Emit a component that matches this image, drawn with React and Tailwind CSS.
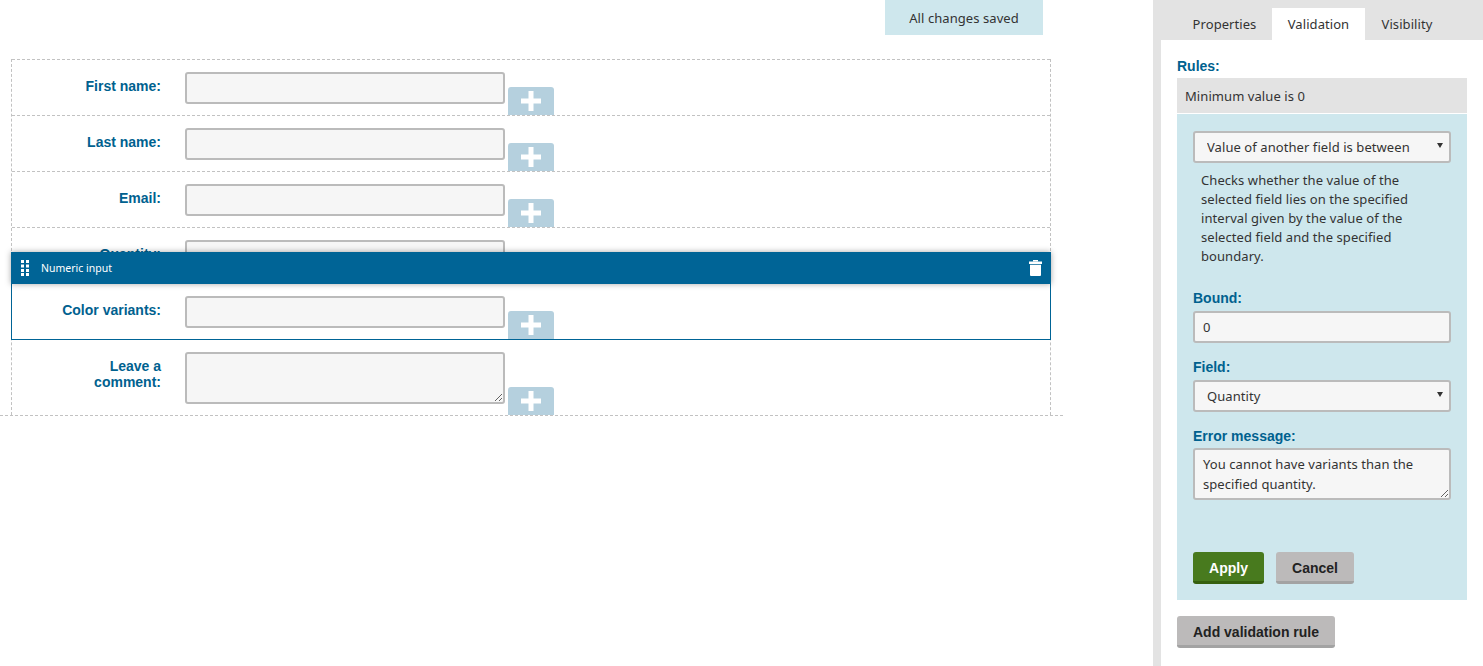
import React from 'react';

const bodyFont = 'font-["Noto_Sans",sans-serif] tracking-[0.07px]';
const labelFont = 'font-["Liberation_Sans",Arial,sans-serif] font-bold text-[14px] tracking-normal text-[#00618f]';
const fieldBox = 'block bg-[#f6f6f6] border-2 border-[#bbbbbb] rounded-[3px] outline-none';
const greyButton = 'h-8 pt-1 bg-[#bcbaba] border-b-[3px] border-[#a3a3a3] rounded-[3px] text-[#222222]';

const PlusIcon = () => (
  <svg width="20" height="20" viewBox="0 0 20 20" fill="#ffffff">
    <rect x="0" y="7.5" width="20" height="5" />
    <rect x="7.5" y="0" width="5" height="20" />
  </svg>
);

const GripIcon = () => (
  <svg width="8" height="16" viewBox="0 0 8 16" fill="#ffffff">
    {[0, 4.5, 9, 13].map((y) => (
      <g key={y}>
        <rect x="0" y={y} width="3" height="3" />
        <rect x="5" y={y} width="3" height="3" />
      </g>
    ))}
  </svg>
);

const TrashIcon = () => (
  <svg width="13" height="16" viewBox="0 0 13 16" fill="#ffffff">
    <rect x="4" y="0" width="5" height="1.5" />
    <rect x="0" y="1.5" width="13" height="2.5" />
    <path d="M1 4.8h11V15a1 1 0 0 1-1 1H2a1 1 0 0 1-1-1z" />
  </svg>
);

const ArrowIcon = () => (
  <svg className="block" width="6" height="5" viewBox="0 0 6 5" fill="#333333">
    <path d="M0 0h6L3 5z" />
  </svg>
);

// Blue "add field" tab next to each input
const AddButton = () => (
  <div className="w-[46px] h-7 ml-[3px] self-end bg-[#b5d0de] rounded-t-[3px] flex items-center justify-center">
    <PlusIcon />
  </div>
);

const FormRow = ({ label, height = 'h-14', multiline, border = 'border-t border-dashed border-[#c2c2c2]', children }) => (
  <div className={`relative flex ${height} ${border} box-border`}>
    <div className={`w-[110px] ml-[39px] mt-[18px] text-right leading-4 ${labelFont}`}>{label}</div>
    <div className="ml-[24px] mt-3">
      {multiline ? (
        <textarea className={`${fieldBox} w-[320px] h-[52px]`} />
      ) : (
        <input className={`${fieldBox} w-[320px] h-8`} />
      )}
    </div>
    <AddButton />
    {children}
  </div>
);

const SelectBox = ({ value }) => (
  <div className="relative w-[258px] h-8">
    <select
      defaultValue={value}
      className={`${fieldBox} appearance-none w-full h-full pl-3 pt-[2px] text-[13px] text-[#333333]`}
    >
      <option>{value}</option>
    </select>
    <span className="absolute right-2 top-3 pointer-events-none">
      <ArrowIcon />
    </span>
  </div>
);

const App = () => {
  return (
    <div className={`flex h-screen overflow-hidden bg-white text-[13px] text-[#333333] ${bodyFont}`}>
      {/* Form canvas */}
      <div className="w-[1153px] shrink-0">
        <div className="flex justify-end pr-[110px]">
          <div className="w-[158px] h-[35px] pt-[2px] bg-[#cee7ed] flex items-center justify-center">All changes saved</div>
        </div>
        <div className="w-[1063px] mt-6 pl-[11px] border-b border-dashed border-[#c2c2c2]">
          <div className="w-[1040px] border-x border-dashed border-[#c2c2c2]">
            <FormRow label="First name:" />
            <FormRow label="Last name:" />
            <FormRow label="Email:" />
            <FormRow label="Quantity:" />
            <FormRow label="Color variants:" border="-mx-px border border-b-0 border-[#006496]">
              <div className="absolute -left-px -right-px -top-[32px] h-8 bg-[#006496] flex items-center shadow-[0_0_6px_rgba(0,0,0,0.35)] text-white text-[10.5px] tracking-normal">
                <span className="ml-[10px]">
                  <GripIcon />
                </span>
                <span className="ml-[12px] pt-[2px]">Numeric input</span>
                <span className="ml-auto mr-[9px]">
                  <TrashIcon />
                </span>
              </div>
            </FormRow>
            <FormRow
              label="Leave a comment:"
              height="h-[76px]"
              multiline
              border="-mx-px px-px border-t border-[#006496]"
            />
          </div>
        </div>
      </div>

      {/* Settings panel */}
      <div className="flex-1 border-l-8 border-[#e3e3e3] min-w-0">
        <div className="h-10 bg-[#e3e3e3] flex items-end pl-4">
          <div className="w-[95px] h-8 pt-[2px] flex items-center justify-center">Properties</div>
          <div className="w-[93px] h-8 pt-[2px] flex items-center justify-center bg-white">Validation</div>
          <div className="w-[84px] h-8 pt-[2px] flex items-center justify-center">Visibility</div>
        </div>
        <div className="px-4">
          <div className={`mt-[18px] h-5 leading-4 ${labelFont}`}>Rules:</div>
          <div className="h-[35px] bg-[#e3e3e3] pl-2 pt-[2px] flex items-center">Minimum value is 0</div>
          <div className="mt-px h-[486px] bg-[#cee7ed] px-4 pt-[17px]">
            <SelectBox value="Value of another field is between" />
            <p className="ml-2 mt-2 w-[232px] leading-[19px]">
              Checks whether the value of the selected field lies on the specified interval given by the value of the
              selected field and the specified boundary.
            </p>
            <div className={`mt-6 h-[21px] leading-4 ${labelFont}`}>Bound:</div>
            <input
              defaultValue="0"
              className={`${fieldBox} w-[258px] h-8 px-2 text-[13px] text-[#333333]`}
            />
            <div className={`mt-4 h-[21px] leading-4 ${labelFont}`}>Field:</div>
            <SelectBox value="Quantity" />
            <div className={`mt-4 h-5 leading-4 ${labelFont}`}>Error message:</div>
            <textarea
              defaultValue="You cannot have variants than the specified quantity."
              className={`${fieldBox} w-[258px] h-[52px] px-2 py-1 leading-5 text-[13px] text-[#333333]`}
            />
            <div className="mt-[52px] flex gap-3 font-['Liberation_Sans',Arial,sans-serif] font-bold text-[14px] tracking-normal">
              <button className="w-[71px] h-8 pt-1 bg-[#487a1e] border-b-[3px] border-[#36600f] rounded-[3px] text-white">
                Apply
              </button>
              <button className={`w-[78px] ${greyButton}`}>Cancel</button>
            </div>
          </div>
          <button className={`mt-4 w-[158px] ${greyButton} font-['Liberation_Sans',Arial,sans-serif] font-bold text-[14px] tracking-normal`}>
            Add validation rule
          </button>
        </div>
      </div>
    </div>
  );
};

export default App;
